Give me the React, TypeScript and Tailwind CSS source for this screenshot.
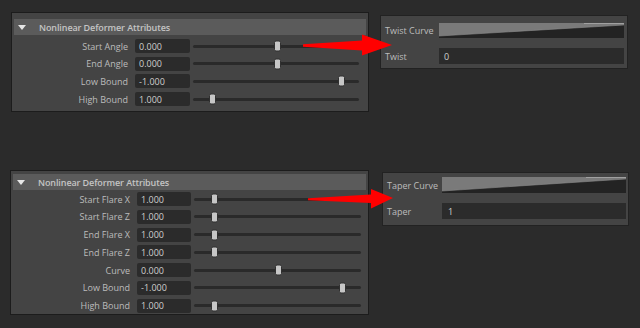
import React from "react";

type Row = { label: string; value: string; pos: number };

const topRows: Row[] = [
  { label: "Start Angle", value: "0.000", pos: 81 },
  { label: "End Angle", value: "0.000", pos: 81 },
  { label: "Low Bound", value: "-1.000", pos: 145 },
  { label: "High Bound", value: "1.000", pos: 16 },
];

const bottomRows: Row[] = [
  { label: "Start Flare X", value: "1.000", pos: 17 },
  { label: "Start Flare Z", value: "1.000", pos: 17 },
  { label: "End Flare X", value: "1.000", pos: 17 },
  { label: "End Flare Z", value: "1.000", pos: 17 },
  { label: "Curve", value: "0.000", pos: 81 },
  { label: "Low Bound", value: "-1.000", pos: 145 },
  { label: "High Bound", value: "1.000", pos: 17 },
];

const Header = () => (
  <div className="h-[16px] bg-[#5b5b5b] flex items-center">
    <svg width="8" height="5" viewBox="0 0 8 5" className="ml-[4px]">
      <polygon points="0,0 8,0 4,5" fill="#e6e6e6" />
    </svg>
    <span className="ml-[13px] text-[9px] font-semibold tracking-[-0.1px] text-[#c4c4c4] leading-none">
      Nonlinear Deformer Attributes
    </span>
  </div>
);

const Slider = ({ pos, width }: { pos: number; width: string }) => (
  <div className={`relative h-full flex items-center ml-[3px] ${width}`}>
    <div className="h-[3px] w-full rounded-full bg-[#2a2a2a]" />
    <div
      className="absolute top-1/2 -translate-y-1/2 w-[7px] h-[11px] rounded-[2px] bg-[#c6c6c6] border border-[#303030]"
      style={{ left: pos }}
    />
  </div>
);

const AttrRow = ({
  row,
  labelW,
  inputW,
  sliderW,
}: {
  row: Row;
  labelW: string;
  inputW: string;
  sliderW: string;
}) => (
  <div className="flex h-[14px] items-center">
    <div className={`${labelW} text-right text-[9px] text-[#bcbcbc] leading-none`}>
      {row.label}
    </div>
    <div
      className={`${inputW} ml-[7px] h-full rounded-[2px] bg-[#2b2b2b] flex items-center pl-[4px] text-[9px] text-[#cfcfcf] leading-none`}
    >
      {row.value}
    </div>
    <Slider pos={row.pos} width={sliderW} />
  </div>
);

const CurveField = ({ w, h }: { w: number; h: number }) => (
  <svg width={w} height={h} viewBox={`0 0 ${w} ${h}`} className="block">
    <rect width={w} height={h} fill="#232323" />
    <polygon points={`0,0 ${w},0 ${w},2 0,${h - 2}`} fill="#7a7a7a" />
    <line x1="0" y1={h - 2} x2={w} y2="2" stroke="#8c8c8c" strokeWidth="0.6" />
    <line x1={w - 40} y1="0.5" x2={w} y2="0.5" stroke="#a0a0a0" strokeWidth="1" />
  </svg>
);

export default function App() {
  return (
    <div
      className="relative w-[640px] h-[328px] overflow-hidden bg-[#2b2b2b]"
      style={{ fontFamily: '"Open Sans", "Noto Sans", sans-serif' }}
    >
      {/* top */}
      <div className="flex items-start pt-[12px] pl-[11px]">
        <div className="w-[358px] h-[100px] border border-[#1c1c1c] bg-[#444444] pt-[6px] px-[2px]">
          <Header />
          <div className="mt-[4px] flex flex-col gap-[3.7px]">
            {topRows.map((r) => (
              <AttrRow key={r.label} row={r} labelW="w-[114px]" inputW="w-[55px]" sliderW="w-[166px]" />
            ))}
          </div>
        </div>

        <div className="ml-[11px] mt-[3px] w-[248px] h-[54px] border border-[#222] bg-[#444444] pt-[7px] pl-[4px]">
          <div className="flex items-center h-[15px]">
            <div className="w-[54px] text-[9px] text-[#bcbcbc] leading-none">Twist Curve</div>
            <CurveField w={185} h={15} />
          </div>
          <div className="flex items-center h-[16px] mt-[10px]">
            <div className="w-[54px] text-[9px] text-[#bcbcbc] leading-none">Twist</div>
            <div className="w-[185px] h-full bg-[#2b2b2b] flex items-center pl-[5px] text-[9px] text-[#cfcfcf] leading-none">
              0
            </div>
          </div>
        </div>
      </div>

      {/* bottom */}
      <div className="flex items-start mt-[58px] pl-[10px]">
        <div className="w-[359px] h-[145px] border border-[#1c1c1c] bg-[#444444] pt-[3px] px-[2px]">
          <Header />
          <div className="mt-[2px] flex flex-col gap-[3.8px]">
            {bottomRows.map((r) => (
              <AttrRow key={r.label} row={r} labelW="w-[117px]" inputW="w-[54px]" sliderW="w-[167px]" />
            ))}
          </div>
        </div>

        <div className="ml-[13px] mt-[2px] w-[247px] h-[54px] border border-[#222] bg-[#444444] pt-[4px] pl-[4px]">
          <div className="flex items-center h-[16px]">
            <div className="w-[55px] text-[9px] text-[#bcbcbc] leading-none">Taper Curve</div>
            <CurveField w={184} h={16} />
          </div>
          <div className="flex items-center h-[16px] mt-[10px]">
            <div className="w-[55px] text-[9px] text-[#bcbcbc] leading-none">Taper</div>
            <div className="w-[184px] h-full bg-[#2b2b2b] flex items-center pl-[6px] text-[9px] text-[#cfcfcf] leading-none">
              1
            </div>
          </div>
        </div>
      </div>

      {/* red arrows */}
      <svg className="absolute inset-0 pointer-events-none" width="640" height="328" viewBox="0 0 640 328">
        <polygon
          points="303,44.3 362,40.5 362,34.5 392,45 362,55.5 362,50.5 303,46.7"
          fill="#ff0000"
        />
        <polygon
          points="308,198.3 371,194.5 371,189 393,198 371,208.5 371,203 308,200.3"
          fill="#ff0000"
        />
      </svg>
    </div>
  );
}
